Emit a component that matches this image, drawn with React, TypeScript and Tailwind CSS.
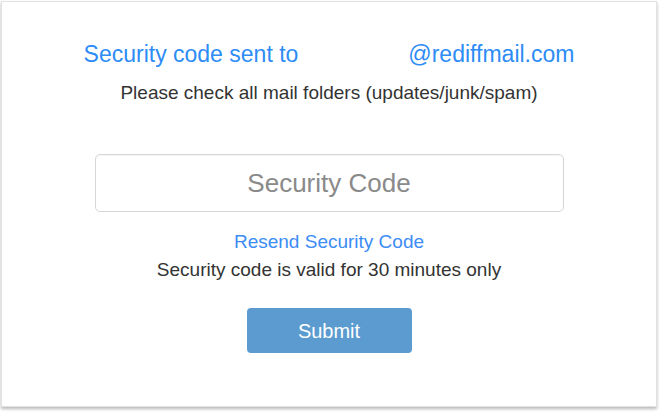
import React from 'react';

const font = { fontFamily: '"Liberation Sans", Arial, sans-serif' };

export default function App() {
  return (
    <div className="w-[660px] h-[414px] bg-white pt-px pl-px" style={font}>
      <div className="w-[656px] h-[406px] bg-white border border-[#e2e2e2] shadow-[0_2px_3px_rgba(0,0,0,0.28)] flex flex-col items-center pt-[38px]">
        <h1 className="text-[23px] leading-[28px] text-[#2d8cf6] whitespace-nowrap">
          Security code sent to
          <span className="inline-block w-[110px]" />
          @rediffmail.com
        </h1>
        <p className="mt-[13px] text-[19px] leading-[24px] text-[#333]">
          Please check all mail folders (updates/junk/spam)
        </p>
        <input
          type="text"
          placeholder="Security Code"
          className="mt-[49px] w-[469px] h-[58px] rounded-[5px] border border-[#d6d6d6] text-center text-[26px] text-[#555] placeholder:text-[#8a8a8a] outline-none shadow-[inset_0_1px_1px_rgba(0,0,0,0.04)]"
          style={font}
        />
        <a href="#" className="mt-[18px] text-[19px] leading-[24px] text-[#3b8cf5]">
          Resend Security Code
        </a>
        <p className="mt-[4px] text-[19px] leading-[24px] text-[#333]">
          Security code is valid for 30 minutes only
        </p>
        <button
          type="button"
          className="mt-[26px] w-[165px] h-[45px] rounded-[4px] bg-[#5b9bd0] text-white text-[20px]"
          style={font}
        >
          Submit
        </button>
      </div>
    </div>
  );
}
